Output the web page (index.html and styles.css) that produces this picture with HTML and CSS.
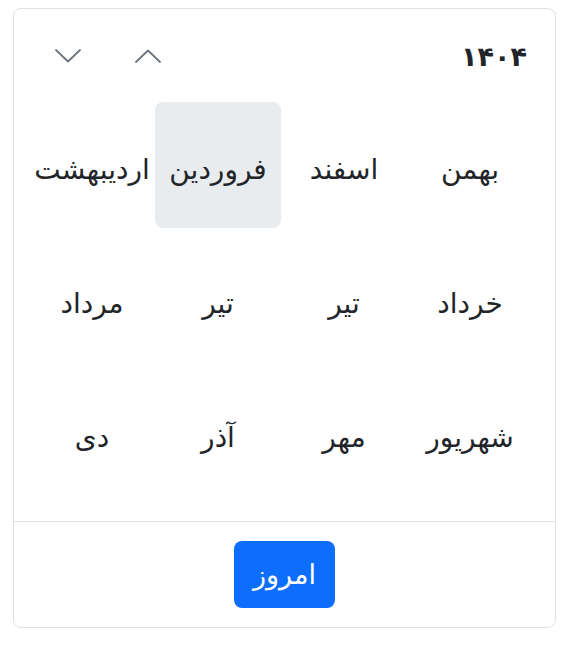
FILE: index.html
```html
<!DOCTYPE html>
<html lang="fa">
<head>
<meta charset="utf-8">
<title>انتخاب ماه</title>
<link rel="stylesheet" href="styles.css">
</head>
<body>
<div class="page">
  <div class="card" dir="rtl">
    <div class="header">
      <div class="year">۱۴۰۴</div>
      <div class="nav">
        <button class="nav-btn" aria-label="up">
          <svg width="26" height="14" viewBox="0 0 26 14"><polyline points="1,13 13,1.5 25,13" fill="none" stroke="#6c757d" stroke-width="1.8" stroke-linecap="round" stroke-linejoin="round"/></svg>
        </button>
        <button class="nav-btn" aria-label="down">
          <svg width="26" height="14" viewBox="0 0 26 14"><polyline points="1,1 13,12.5 25,1" fill="none" stroke="#6c757d" stroke-width="1.8" stroke-linecap="round" stroke-linejoin="round"/></svg>
        </button>
      </div>
    </div>
    <div class="grid">
      <div class="cell">بهمن</div>
      <div class="cell">اسفند</div>
      <div class="cell selected">فروردین</div>
      <div class="cell">اردیبهشت</div>
      <div class="cell">خرداد</div>
      <div class="cell">تیر</div>
      <div class="cell">تیر</div>
      <div class="cell">مرداد</div>
      <div class="cell">شهریور</div>
      <div class="cell">مهر</div>
      <div class="cell">آذر</div>
      <div class="cell">دی</div>
    </div>
    <div class="footer">
      <button class="today">امروز</button>
    </div>
  </div>
</div>
</body>
</html>
```
FILE: styles.css
```css
html, body {
  margin: 0;
  padding: 0;
  background: #ffffff;
}
.page {
  padding: 8px 0 0 13px;
}
.card {
  box-sizing: border-box;
  width: 543px;
  border: 1px solid #dee2e6;
  border-radius: 8px;
  background: #fff;
  font-family: "DejaVu Sans", sans-serif;
  color: #212529;
}
.header {
  height: 93px;
  display: flex;
  align-items: center;
  justify-content: space-between;
  padding: 0 28px 0 14px;
}
.year {
  font-weight: bold;
  font-size: 27px;
  line-height: 1;
  padding-top: 2px;
}
.nav {
  display: flex;
}
.nav-btn {
  width: 80px;
  height: 40px;
  border: 0;
  background: transparent;
  padding: 0;
  display: flex;
  align-items: center;
  justify-content: center;
}
.grid {
  display: grid;
  grid-template-columns: repeat(4, 126px);
  grid-auto-rows: 126px;
  row-gap: 8px;
  padding: 0 22px 25px 15px;
}
.cell {
  display: flex;
  align-items: center;
  justify-content: center;
  font-size: 28px;
  white-space: nowrap;
  border-radius: 8px;
  padding-top: 8px;
  box-sizing: border-box;
}
.cell.selected {
  background: #e9ecef;
}
.footer {
  border-top: 1px solid #dee2e6;
  padding: 19px 0;
  display: flex;
  justify-content: center;
}
.today {
  width: 101px;
  height: 67px;
  border: 0;
  border-radius: 8px;
  background: #0d6efd;
  color: #fff;
  font-family: "DejaVu Sans", sans-serif;
  font-size: 27px;
  padding: 0;
}
```
